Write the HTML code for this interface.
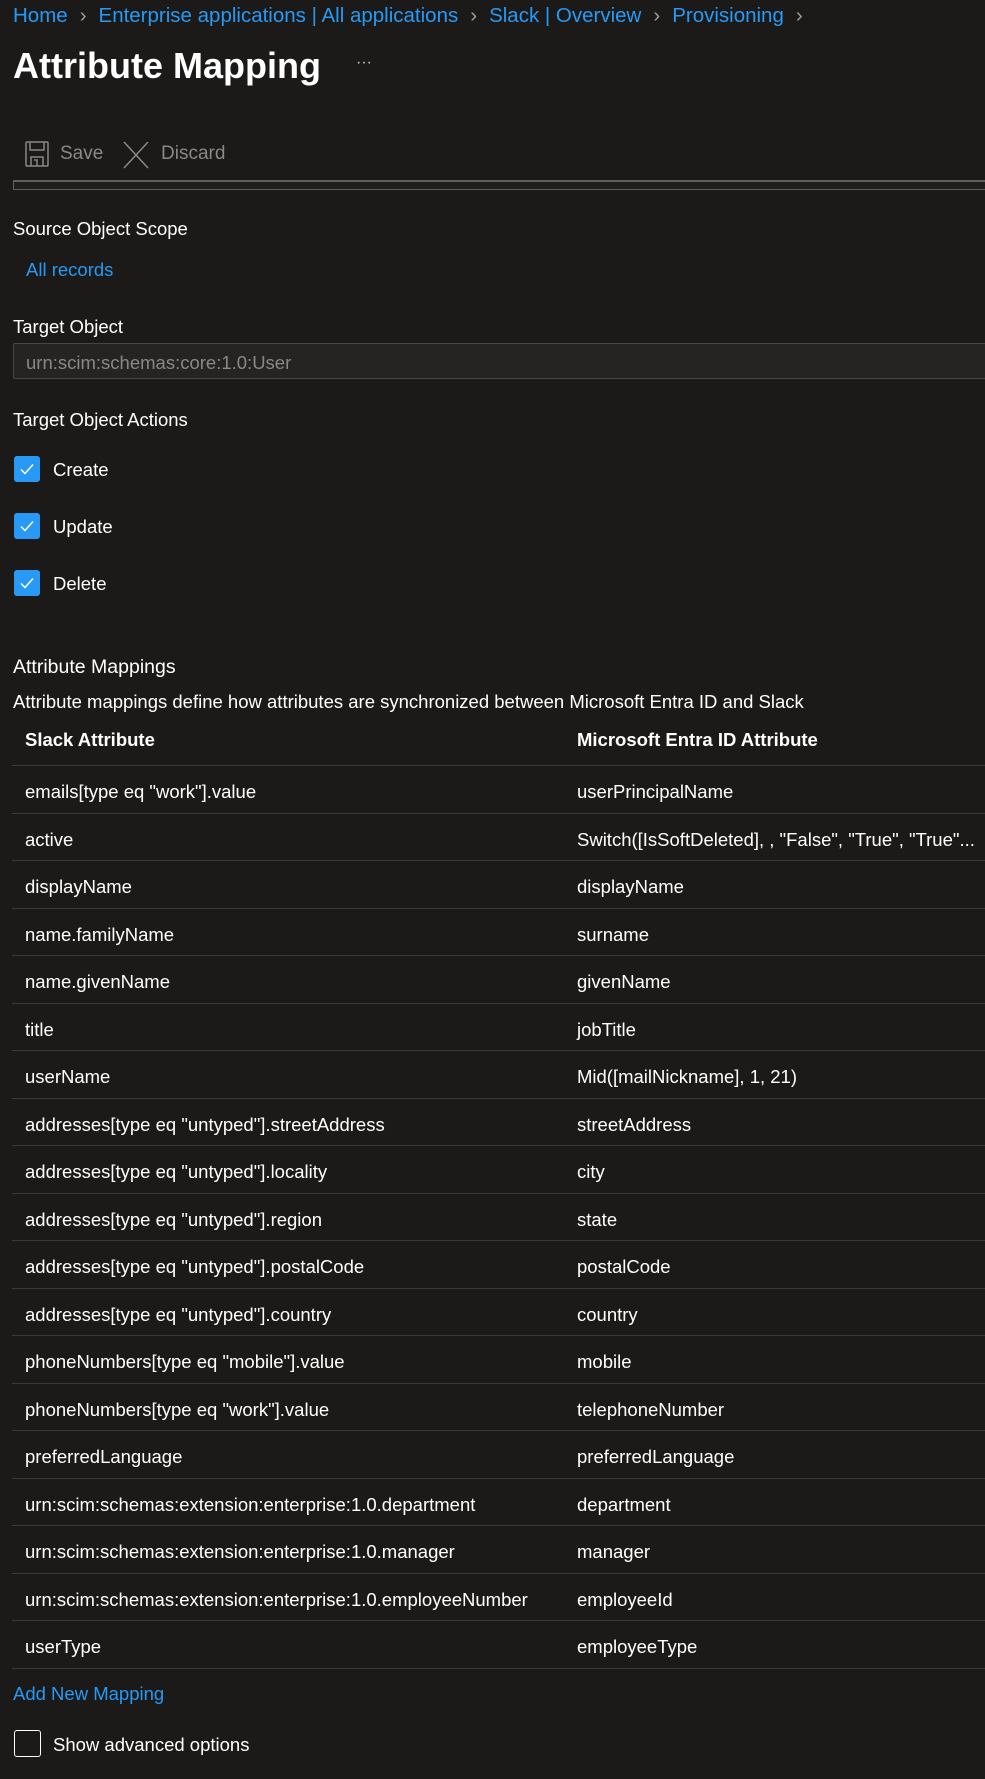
<!DOCTYPE html>
<html><head><meta charset="utf-8"><style>
*{margin:0;padding:0;box-sizing:border-box}
body{width:985px;height:1779px;background:#1b1a19;color:#fff;font-family:"Liberation Sans",sans-serif;font-size:18.5px;position:relative;overflow:hidden}
.a{position:absolute;white-space:nowrap}
.l{color:#2899f5}
.bc{top:4px;left:13px;font-size:20.5px;color:#2899f5}
.bc span.s{color:#a19f9d;margin:0 12px}
.cb{position:absolute;left:14px;width:26px;height:26px;border-radius:3px;background:#2899f5}
.row{position:absolute;left:12px;right:0;height:1px;background:#3b3a39}
</style></head><body>
<div class="a bc">Home<span class="s">›</span>Enterprise applications | All applications<span class="s">›</span>Slack | Overview<span class="s">›</span>Provisioning<span class="s">›</span></div>
<div class="a" style="top:45px;left:13px;font-size:36px;font-weight:bold">Attribute Mapping</div>
<div class="a" style="top:54px;left:356px;font-size:16px;color:#ccc">···</div>
<svg class="a" style="top:141px;left:25px" width="24" height="26" viewBox="0 0 24 26" fill="none" stroke="#8a8886" stroke-width="1.5"><rect x="1" y="1" width="22" height="24" rx="1"/><path d="M5 1v8h14V1M6 25v-9h12v9M9 19h3v6"/></svg>
<div class="a" style="top:143px;left:60px;color:#8a8886;font-size:19px">Save</div>
<svg class="a" style="top:141px;left:123px" width="26" height="28" viewBox="0 0 26 28" stroke="#8a8886" stroke-width="1.5"><path d="M1 1L25 27M25 1L1 27"/></svg>
<div class="a" style="top:143px;left:161px;color:#8a8886;font-size:19px">Discard</div>
<div class="a" style="top:180px;left:13px;width:980px;height:10px;border:1px solid #605e5c;border-top-width:2px;background:#1f1e1d"></div>
<div class="a" style="top:218px;left:13px">Source Object Scope</div>
<div class="a l" style="top:259px;left:26px">All records</div>
<div class="a" style="top:316px;left:13px">Target Object</div>
<div class="a" style="top:343px;left:13px;width:980px;height:36px;border:1px solid #484644;background:#252423;border-radius:2px"></div>
<div class="a" style="top:352px;left:26px;color:#8a8886">urn:scim:schemas:core:1.0:User</div>
<div class="a" style="top:409px;left:13px">Target Object Actions</div>
<div class="cb" style="top:456px"></div><svg class="a" style="top:456px;left:14px" width="26" height="26"><path d="M7 13.5l4 4 8-9" stroke="#fff" stroke-width="1.5" fill="none"/></svg>
<div class="a" style="top:459px;left:53px">Create</div>
<div class="cb" style="top:513px"></div><svg class="a" style="top:513px;left:14px" width="26" height="26"><path d="M7 13.5l4 4 8-9" stroke="#fff" stroke-width="1.5" fill="none"/></svg>
<div class="a" style="top:516px;left:53px">Update</div>
<div class="cb" style="top:570px"></div><svg class="a" style="top:570px;left:14px" width="26" height="26"><path d="M7 13.5l4 4 8-9" stroke="#fff" stroke-width="1.5" fill="none"/></svg>
<div class="a" style="top:573px;left:53px">Delete</div>
<div class="a" style="top:656px;left:13px;font-size:19.5px">Attribute Mappings</div>
<div class="a" style="top:691px;left:13px">Attribute mappings define how attributes are synchronized between Microsoft Entra ID and Slack</div>
<div class="a" style="top:729px;left:25px;font-weight:bold">Slack Attribute</div>
<div class="a" style="top:729px;left:577px;font-weight:bold">Microsoft Entra ID Attribute</div>
<div class="row" style="top:765px"></div>
<div id="rows"></div>
<div class="a l" style="top:1683px;left:13px">Add New Mapping</div>
<div class="a" style="top:1730px;left:14px;width:27px;height:27px;border:1.5px solid #fff;border-radius:3px"></div>
<div class="a" style="top:1734px;left:53px">Show advanced options</div>
<script>
var d=[["emails[type eq \"work\"].value","userPrincipalName"],["active","Switch([IsSoftDeleted], , \"False\", \"True\", \"True\"..."],["displayName","displayName"],["name.familyName","surname"],["name.givenName","givenName"],["title","jobTitle"],["userName","Mid([mailNickname], 1, 21)"],["addresses[type eq \"untyped\"].streetAddress","streetAddress"],["addresses[type eq \"untyped\"].locality","city"],["addresses[type eq \"untyped\"].region","state"],["addresses[type eq \"untyped\"].postalCode","postalCode"],["addresses[type eq \"untyped\"].country","country"],["phoneNumbers[type eq \"mobile\"].value","mobile"],["phoneNumbers[type eq \"work\"].value","telephoneNumber"],["preferredLanguage","preferredLanguage"],["urn:scim:schemas:extension:enterprise:1.0.department","department"],["urn:scim:schemas:extension:enterprise:1.0.manager","manager"],["urn:scim:schemas:extension:enterprise:1.0.employeeNumber","employeeId"],["userType","employeeType"]];
var h="";for(var i=0;i<d.length;i++){var t=765+i*47.5;h+='<div class="a" style="top:'+(t+16)+'px;left:25px">'+d[i][0].replace(/"/g,"&quot;")+'</div><div class="a" style="top:'+(t+16)+'px;left:577px">'+d[i][1].replace(/"/g,"&quot;")+'</div><div class="row" style="top:'+(t+47.5)+'px"></div>';}
document.getElementById("rows").innerHTML=h;
</script>
</body></html>
